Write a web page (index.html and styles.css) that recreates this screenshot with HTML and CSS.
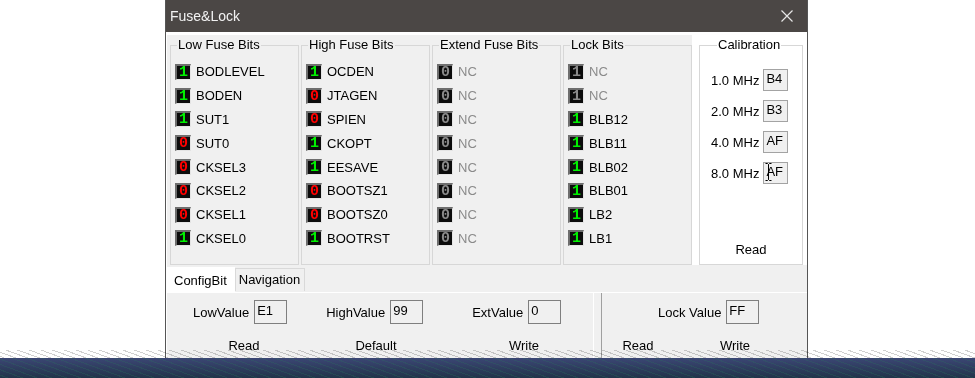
FILE: index.html
```html
<!DOCTYPE html>
<html>
    <head>
        <title>Fuse&amp;Lock</title>
        <link rel="stylesheet" href="styles.css">
    </head>
    <body>
        <div class="window">
            <div class="titlebar">
                <span class="title">Fuse&amp;Lock</span>
                <svg class="close" width="12" height="12" viewBox="0 0 12 12">
                    <path d="M0.5 0.5 L11.5 11.5 M11.5 0.5 L0.5 11.5" stroke="#e6e6e6" stroke-width="1.2" fill="none"/>
                </svg>
            </div>

            <div class="client">
                <div class="fuses">
                    <div class="bits-area">
                        <fieldset class="group">
                            <legend>Low Fuse Bits</legend>
                            <div class="bit"><span class="led on">1</span>BODLEVEL</div>
                            <div class="bit"><span class="led on">1</span>BODEN</div>
                            <div class="bit"><span class="led on">1</span>SUT1</div>
                            <div class="bit"><span class="led off">0</span>SUT0</div>
                            <div class="bit"><span class="led off">0</span>CKSEL3</div>
                            <div class="bit"><span class="led off">0</span>CKSEL2</div>
                            <div class="bit"><span class="led off">0</span>CKSEL1</div>
                            <div class="bit"><span class="led on">1</span>CKSEL0</div>
                        </fieldset>
                        <fieldset class="group">
                            <legend>High Fuse Bits</legend>
                            <div class="bit"><span class="led on">1</span>OCDEN</div>
                            <div class="bit"><span class="led off">0</span>JTAGEN</div>
                            <div class="bit"><span class="led off">0</span>SPIEN</div>
                            <div class="bit"><span class="led on">1</span>CKOPT</div>
                            <div class="bit"><span class="led on">1</span>EESAVE</div>
                            <div class="bit"><span class="led off">0</span>BOOTSZ1</div>
                            <div class="bit"><span class="led off">0</span>BOOTSZ0</div>
                            <div class="bit"><span class="led on">1</span>BOOTRST</div>
                        </fieldset>
                        <fieldset class="group">
                            <legend>Extend Fuse Bits</legend>
                            <div class="bit nc"><span class="led">0</span>NC</div>
                            <div class="bit nc"><span class="led">0</span>NC</div>
                            <div class="bit nc"><span class="led">0</span>NC</div>
                            <div class="bit nc"><span class="led">0</span>NC</div>
                            <div class="bit nc"><span class="led">0</span>NC</div>
                            <div class="bit nc"><span class="led">0</span>NC</div>
                            <div class="bit nc"><span class="led">0</span>NC</div>
                            <div class="bit nc"><span class="led">0</span>NC</div>
                        </fieldset>
                        <fieldset class="group">
                            <legend>Lock Bits</legend>
                            <div class="bit nc"><span class="led">1</span>NC</div>
                            <div class="bit nc"><span class="led">1</span>NC</div>
                            <div class="bit"><span class="led on">1</span>BLB12</div>
                            <div class="bit"><span class="led on">1</span>BLB11</div>
                            <div class="bit"><span class="led on">1</span>BLB02</div>
                            <div class="bit"><span class="led on">1</span>BLB01</div>
                            <div class="bit"><span class="led on">1</span>LB2</div>
                            <div class="bit"><span class="led on">1</span>LB1</div>
                        </fieldset>
                    </div>

                    <div class="calib-area">
                        <fieldset class="calib">
                            <legend>Calibration</legend>
                            <div class="cal-row"><span>1.0 MHz</span><span class="field">B4</span></div>
                            <div class="cal-row"><span>2.0 MHz</span><span class="field">B3</span></div>
                            <div class="cal-row"><span>4.0 MHz</span><span class="field">AF</span></div>
                            <div class="cal-row">
                                <span>8.0 MHz</span>
                                <span class="field">AF
                                    <!-- mouse pointer sitting over the box -->
                                    <svg class="ibeam" width="7" height="18" viewBox="0 0 7 18">
                                        <path d="M0.5 0.5 H2.5 L3.5 1.5 L4.5 0.5 H6.5 M3.5 1.5 V16.5 M0.5 17.5 H2.5 L3.5 16.5 L4.5 17.5 H6.5" stroke="#000" fill="none"/>
                                    </svg>
                                </span>
                            </div>
                            <div class="cal-read">Read</div>
                        </fieldset>
                    </div>
                </div>

                <div class="tabs">
                    <span class="tab active">ConfigBit</span>
                    <span class="tab">Navigation</span>
                </div>

                <div class="pages">
                    <div class="page config">
                        <div class="value-row">
                            <label class="value low">LowValue <span class="field">E1</span></label>
                            <label class="value high">HighValue <span class="field">99</span></label>
                            <label class="value ext">ExtValue <span class="field">0</span></label>
                        </div>
                        <div class="btn-row">
                            <span class="btn read">Read</span>
                            <span class="btn default">Default</span>
                            <span class="btn write">Write</span>
                        </div>
                    </div>
                    <div class="page lock">
                        <div class="value-row">
                            <label class="value lockval">Lock Value <span class="field">FF</span></label>
                        </div>
                        <div class="btn-row">
                            <span class="btn lread">Read</span>
                            <span class="btn lwrite">Write</span>
                        </div>
                    </div>
                </div>
            </div>
        </div>

        <div class="hatch"></div>
        <div class="taskbar"></div>
    </body>
</html>
```

FILE: styles.css
```css
/* page: white desktop with the dialog and a strip of taskbar below */
body {
    margin: 0;
    height: 378px;
    overflow: hidden;
    position: relative;
    background: #fff;
    font-family: "Liberation Sans", Arial, sans-serif;
    font-size: 13px;
    color: #000;
}

.window {
    box-sizing: border-box;
    margin-left: 165px;
    width: 643px;
    height: 358px;
    border-left: 1px solid #555;
    border-right: 1px solid #555;
    background: #fff;
    overflow: hidden;
}

.titlebar {
    height: 32px;
    background: #4b4745;
    display: flex;
    align-items: center;
    justify-content: space-between;
    padding: 0 14px 0 4px;
}

.title {
    color: #f2f2f2;
    font-size: 14px;
}

.client {
    padding: 3px 0 0 1px;
}

/* top half: four bit groups + calibration */
.fuses {
    display: flex;
    height: 230px;
}

.bits-area {
    width: 525px;
    box-sizing: border-box;
    background: #f0f0f0;
    display: flex;
    gap: 2px;
    padding: 2px 0 0 3px;
}

fieldset {
    box-sizing: border-box;
    margin: 0;
    min-width: 0;
    height: 228px;
    border: 1px solid #d7d7d7;
}

legend {
    padding: 0 1px;
    margin-left: 2px;
    line-height: 16px;
    font-size: 13px;
}

.group {
    flex: 1;
    padding: 7px 0 0 4px;
    display: grid;
    grid-auto-rows: 23.8px;
    align-content: start;
}

.bit {
    display: flex;
    align-items: center;
    gap: 5px;
}

.led {
    box-sizing: border-box;
    width: 16px;
    height: 16px;
    border-style: solid;
    border-width: 2px 1px 1px 2px;
    border-color: #6e6e6e #e4e4e4 #e4e4e4 #6e6e6e;
    background: #0c0c0c;
    font: bold 15px/13px "Liberation Mono", monospace;
    text-align: center;
    color: #8a8a8a;
}

.led.on {
    color: #00f000;
}

.led.off {
    color: #ff0000;
}

.nc {
    color: #8a8a8a;
}

.calib-area {
    flex: 1;
    background: #fff;
    padding: 2px 3px 0 7px;
}

.calib {
    width: 104px;
    padding: 16px 0 0 11px;
}

.calib legend {
    margin-left: 6px;
}

.cal-row {
    display: flex;
    align-items: center;
    gap: 4px;
    margin-bottom: 9px;
}

.calib .field {
    width: 25px;
    height: 22px;
    position: relative;
}

.ibeam {
    position: absolute;
    left: 1px;
    top: 0;
}

.cal-read {
    margin: 58px 0 0 -11px;
    text-align: center;
    line-height: 16px;
}

/* edit boxes */
.field {
    box-sizing: border-box;
    display: inline-block;
    background: #f0f0f0;
    border: 1px solid #a3a3a3;
    padding: 1px 2px;
    line-height: 16px;
}

/* tab strip */
.tabs {
    height: 27px;
    background: #f0f0f0;
    display: flex;
    align-items: flex-end;
}

.tab {
    box-sizing: border-box;
    height: 23px;
    margin-bottom: 1px;
    padding: 2px 4px 0 3px;
    border: 1px solid #d9d9d9;
    border-bottom: none;
    line-height: 18px;
}

.tab.active {
    height: 25px;
    margin-bottom: 0;
    padding: 5px 8px 0 7px;
    border: none;
    background: #fff;
}

/* bottom pages */
.pages {
    display: flex;
    height: 65px;
    border-top: 1px solid #fff;
    background: #f0f0f0;
}

.page.config {
    width: 426px;
    border-right: 1px solid #fff;
}

.page.lock {
    flex: 1;
    margin-left: 7px;
    border-left: 1px solid #a0a0a0;
}

.value-row {
    display: flex;
    align-items: center;
    padding-top: 7px;
}

.value {
    display: flex;
    align-items: center;
    gap: 5px;
}

.value .field {
    width: 33px;
    height: 24px;
    border-color: #7f7f7f;
    padding-top: 2px;
}

.low { margin-left: 26px; }
.high { margin-left: 39px; }
.ext { margin-left: 49px; }
.lockval { margin-left: 56px; }

.btn-row {
    display: flex;
    margin-top: 14px;
    line-height: 16px;
}

.btn {
    width: 76px;
    text-align: center;
}

.read { margin-left: 39px; }
.default { margin-left: 56px; }
.write { margin-left: 72px; }

.lock .btn { width: 70px; }
.lread { margin-left: 1px; }
.lwrite { margin-left: 27px; }

/* scan artefact stripes lying over the bottom of everything */
.hatch {
    position: absolute;
    left: 0;
    right: 0;
    top: 350px;
    height: 8px;
    mix-blend-mode: multiply;
    background: repeating-linear-gradient(200deg, transparent 0 3px, #cfcfcf 3px 4px);
}

.taskbar {
    height: 20px;
    background:
        repeating-linear-gradient(200deg, transparent 0 4px, rgba(40, 120, 90, .25) 4px 5px),
        linear-gradient(#3b4674, #22344a);
}
```
